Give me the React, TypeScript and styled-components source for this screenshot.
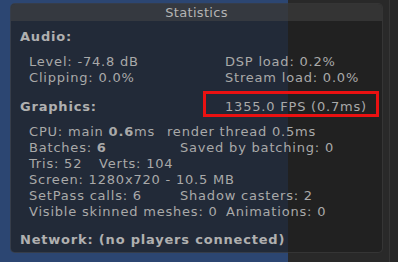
import React from "react";
import styled, { createGlobalStyle } from "styled-components";

const GlobalStyle = createGlobalStyle`
  html, body {
    margin: 0;
    padding: 0;
    width: 398px;
    height: 262px;
    overflow: hidden;
    background: #282828;
  }
`;

const Page = styled.div`
  box-sizing: border-box;
  width: 398px;
  height: 262px;
  padding: 3px 0 0 10px;
  background: linear-gradient(
    to right,
    #2c4672 0,
    #2c4672 288px,
    #292929 288px,
    #292929 389px,
    #363636 389px,
    #363636 390px,
    #272727 390px
  );
`;

const Panel = styled.div`
  position: relative;
  box-sizing: border-box;
  width: 373px;
  height: 250px;
  border: 1px solid rgba(255, 255, 255, 0.09);
  border-radius: 5px;
  background: rgba(30, 30, 30, 0.68);
  overflow: hidden;
  font-family: "DejaVu Sans", Verdana, sans-serif;
  font-size: 13px;
  letter-spacing: 0.8px;
  color: #a9a9a9;
`;

const TitleBar = styled.div`
  height: 17px;
  line-height: 17px;
  text-align: center;
  letter-spacing: 0.3px;
  color: #b4b4b4;
  background: rgba(72, 72, 72, 0.5);
`;

const Body = styled.div`
  padding: 8px 9px 0 9px;
`;

const Section = styled.div<{ $gap?: number }>`
  display: flex;
  flex-direction: column;
  margin-top: ${(p) => p.$gap ?? 0}px;
`;

const Heading = styled.div`
  display: flex;
  line-height: 16px;
  margin-bottom: 9px;
  white-space: pre;
`;

const HeadingLabel = styled.span<{ $w?: number }>`
  font-weight: bold;
  color: #b0b0b0;
  flex: none;
  ${(p) => (p.$w ? `width: ${p.$w}px;` : "")}
`;

const Items = styled.div`
  display: flex;
  flex-direction: column;
  padding-left: 9px;
`;

const Line = styled.div`
  display: flex;
  line-height: 16px;
  white-space: pre;
`;

const Cell = styled.span<{ $w?: number }>`
  flex: none;
  ${(p) => (p.$w ? `width: ${p.$w}px;` : "")}
`;

const Strong = styled.b`
  font-weight: bold;
`;

const Annotation = styled.div`
  position: absolute;
  left: 192px;
  top: 87px;
  width: 176px;
  height: 26px;
  box-sizing: border-box;
  border: 3px solid #ea1111;
  pointer-events: none;
`;

export default function App() {
  return (
    <>
      <GlobalStyle />
      <Page>
        <Panel>
          <TitleBar>Statistics</TitleBar>
          <Body>
            <Section>
              <Heading>
                <HeadingLabel>Audio:</HeadingLabel>
              </Heading>
              <Items>
                <Line>
                  <Cell $w={196}>Level: -74.8 dB</Cell>
                  <Cell>DSP load: 0.2%</Cell>
                </Line>
                <Line>
                  <Cell $w={196}>Clipping: 0.0%</Cell>
                  <Cell>Stream load: 0.0%</Cell>
                </Line>
              </Items>
            </Section>
            <Section $gap={13}>
              <Heading>
                <HeadingLabel $w={205}>Graphics:</HeadingLabel>
                <Cell>1355.0 FPS (0.7ms)</Cell>
              </Heading>
              <Items>
                <Line>
                  <Cell $w={138}>
                    CPU: main <Strong>0.6</Strong>ms
                  </Cell>
                  <Cell>render thread 0.5ms</Cell>
                </Line>
                <Line>
                  <Cell $w={151}>
                    Batches: <Strong>6</Strong>
                  </Cell>
                  <Cell>Saved by batching: 0</Cell>
                </Line>
                <Line>
                  <Cell $w={70}>Tris: 52</Cell>
                  <Cell>Verts: 104</Cell>
                </Line>
                <Line>
                  <Cell>Screen: 1280x720 - 10.5 MB</Cell>
                </Line>
                <Line>
                  <Cell $w={151}>SetPass calls: 6</Cell>
                  <Cell>Shadow casters: 2</Cell>
                </Line>
                <Line>
                  <Cell $w={197}>Visible skinned meshes: 0</Cell>
                  <Cell>Animations: 0</Cell>
                </Line>
              </Items>
            </Section>
            <Section $gap={12}>
              <Heading>
                <HeadingLabel>Network: (no players connected)</HeadingLabel>
              </Heading>
            </Section>
          </Body>
          <Annotation />
        </Panel>
      </Page>
    </>
  );
}
